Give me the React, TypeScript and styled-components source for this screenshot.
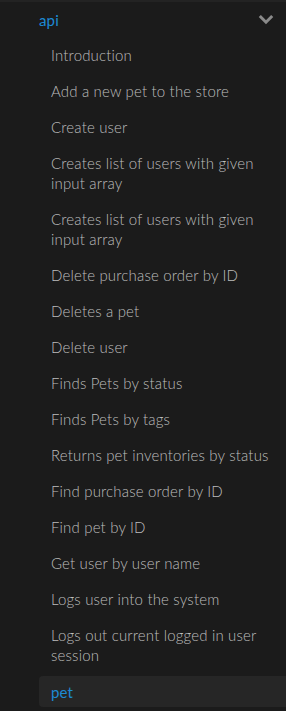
import * as React from 'react'
import styled, { createGlobalStyle } from 'styled-components'

const GlobalStyle = createGlobalStyle`
  html, body {
    margin: 0;
    padding: 0;
    background: #1b1b1b;
  }
  body {
    font-family: Lato, "Liberation Sans", sans-serif;
  }
`

const Sidebar = styled.nav`
  width: 286px;
  height: 711px;
  background: #1b1b1b;
  border-top: 2px solid #232323;
  box-sizing: border-box;
  overflow: hidden;
`

const GroupHeader = styled.div`
  display: flex;
  align-items: center;
  justify-content: space-between;
  height: 35px;
  padding: 0 12px 0 39px;
`

const GroupTitle = styled.span`
  color: #1d8ad4;
  font-size: 15px;
  letter-spacing: 0.15px;
`

const Chevron = styled.svg`
  width: 16px;
  height: 11px;
`

const ItemList = styled.ul`
  list-style: none;
  margin: 0;
  padding: 0;
`

const Item = styled.li`
  padding: 8px 8px 8px 51px;
  color: #bdbdbd;
  font-size: 15px;
  font-weight: 300;
  letter-spacing: 0.17px;
  line-height: 20px;
`

const Collapsed = styled.div`
  margin: 3px 0 0 39px;
  height: 31px;
  display: flex;
  align-items: center;
  padding-left: 12px;
  background: #262626;
  border-radius: 4px 0 0 4px;
  color: #1d8ad4;
  font-size: 15px;
  letter-spacing: 0.15px;
`

const items = [
  'Introduction',
  'Add a new pet to the store',
  'Create user',
  'Creates list of users with given input array',
  'Creates list of users with given input array',
  'Delete purchase order by ID',
  'Deletes a pet',
  'Delete user',
  'Finds Pets by status',
  'Finds Pets by tags',
  'Returns pet inventories by status',
  'Find purchase order by ID',
  'Find pet by ID',
  'Get user by user name',
  'Logs user into the system',
  'Logs out current logged in user session',
]

const App: React.FC = () => {
  return (
    <>
      <GlobalStyle />
      <Sidebar>
        <GroupHeader>
          <GroupTitle>api</GroupTitle>
          <Chevron viewBox="0 0 16 11">
            <path d="M1.8 2 L8 8.2 L14.2 2" fill="none" stroke="#8a8a8a" strokeWidth="3" />
          </Chevron>
        </GroupHeader>
        <ItemList>
          {items.map((text, i) => (
            <Item key={i}>{text}</Item>
          ))}
        </ItemList>
        <Collapsed>pet</Collapsed>
      </Sidebar>
    </>
  )
}

export default App
